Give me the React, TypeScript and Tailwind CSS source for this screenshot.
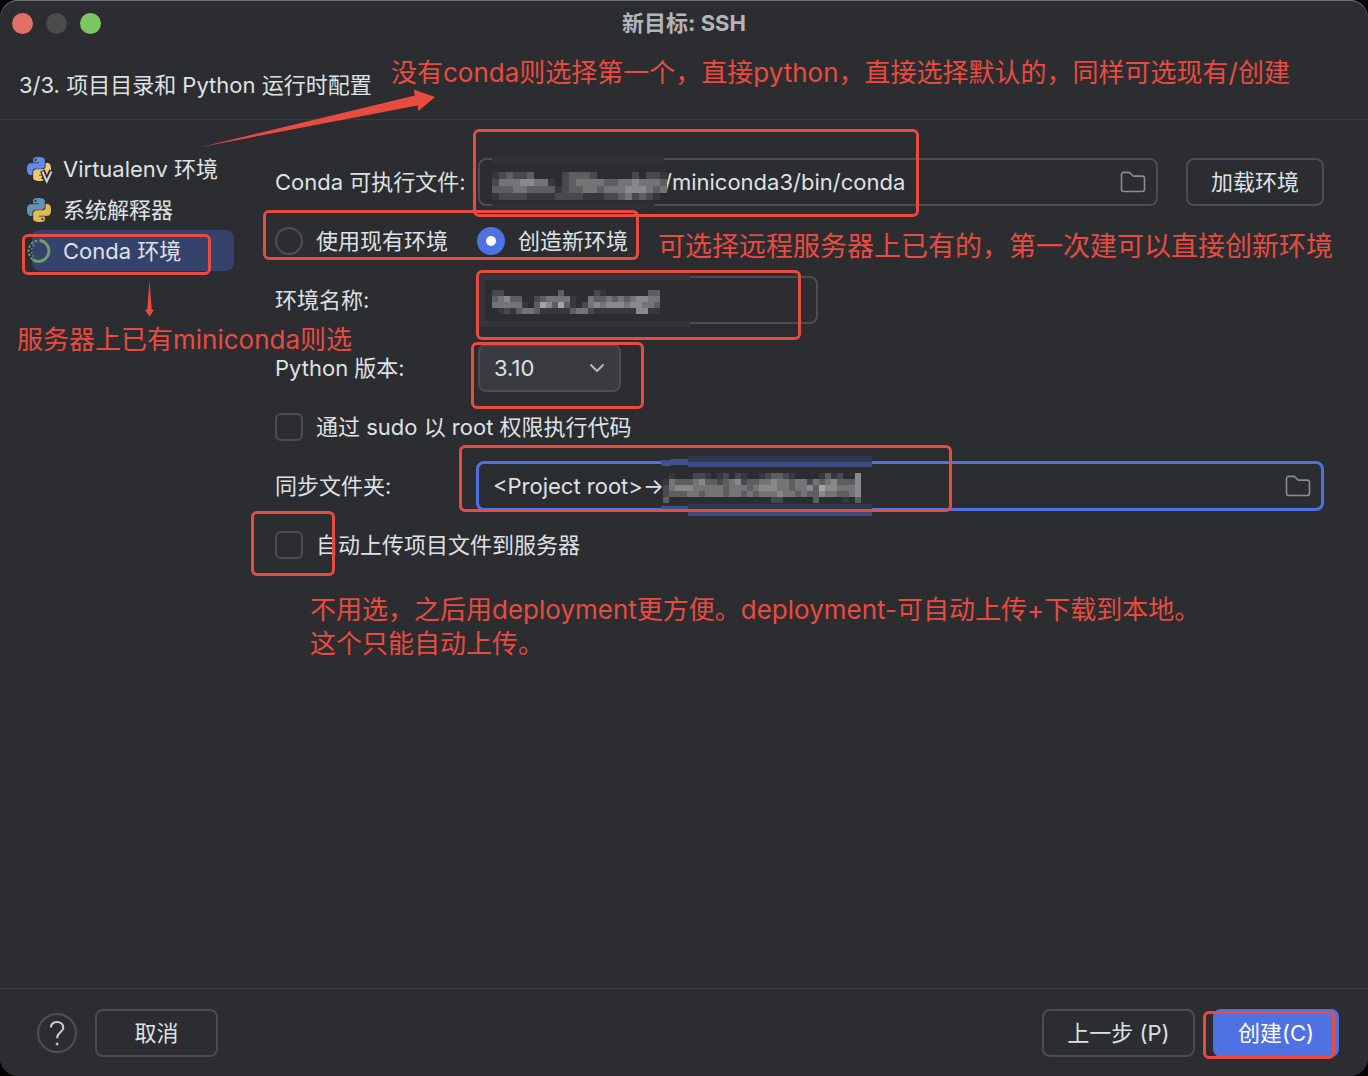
import React from 'react';
import { ChevronDown } from 'lucide-react';

const shades: Record<string, string> = {
  '1': '#36383b',
  '2': '#48494c',
  '3': '#5c5e60',
  '4': '#727476',
  '5': '#87898b',
  '6': '#a3a5a7',
};

const condaPathBlocks = [
  '1232230000233320000020221',
  '2444554410234444334454443',
  '3334433331233443444555434',
  '1222211112222111223423210',
];

const envNameBlocks = [
  '2200000000030000021000000033',
  '3453300234444100433434345544',
  '4444410365363102454555455443',
  '0121344311111344211111115511',
];

const syncPathBlocks = [
  '010002210120210012332100001312005',
  '143334533234523344544344243453335',
  '245554444434443455544344536554445',
  '233344344434434344454434335443345',
  '300000000000000000220000030000103',
];

interface MosaicProps {
  rows: string[];
  x: number;
  y: number;
  cell: number;
}

const Mosaic: React.FC<MosaicProps> = ({ rows, x, y, cell }) => (
  <g shapeRendering="crispEdges">
    {rows.map((row, r) =>
      row.split('').map((level, c) =>
        level === '0' ? null : (
          <rect
            key={`${r}-${c}`}
            x={x + c * cell}
            y={y + r * cell}
            width={cell}
            height={cell}
            fill={shades[level]}
          />
        )
      )
    )}
  </g>
);

const pythonHalf =
  'M14.25.18l.9.2.73.26.59.3.45.32.34.34.25.34.16.33.1.3.04.26.02.2-.01.13V8.5l-.05.63-.13.55-.21.46-.26.38-.3.31-.33.25-.35.19-.35.14-.33.1-.3.07-.26.04-.21.02H8.77l-.69.05-.59.14-.5.22-.41.27-.33.32-.27.35-.2.36-.15.37-.1.35-.07.32-.04.27-.02.21v3.06H3.17l-.21-.03-.28-.07-.32-.12-.35-.18-.36-.26-.36-.36-.35-.46-.32-.59-.28-.73-.21-.88-.14-1.05-.05-1.23.06-1.22.16-1.04.24-.87.32-.71.36-.57.4-.44.42-.33.42-.24.4-.16.36-.1.32-.05.24-.01h.16l.06.01h8.16v-.83H6.18l-.01-2.75-.02-.37.05-.34.11-.31.17-.28.25-.26.31-.23.38-.2.44-.18.51-.15.58-.12.64-.1.71-.06.77-.04.84-.02 1.27.05zm-6.3 1.98l-.23.33-.08.41.08.41.23.34.33.22.41.09.41-.09.33-.22.23-.34.08-.41-.08-.41-.23-.33-.33-.22-.41-.09-.41.09z';

const PythonIcon: React.FC = () => (
  <svg viewBox="0 0 24 24" className="size-6 shrink-0" aria-hidden="true">
    <path d={pythonHalf} fill="#6292b8" />
    <path d={pythonHalf} fill="#e0bb51" transform="rotate(180 12 12)" />
  </svg>
);

const VirtualenvIcon: React.FC = () => (
  <svg viewBox="0 0 24 24" className="size-6 shrink-0 overflow-visible" aria-hidden="true">
    <path d={pythonHalf} fill="#6288ec" />
    <path d={pythonHalf} fill="#ecc871" transform="rotate(180 12 12)" />
    <path d="M15.500 13.500l4.300 11.200 4.700-11.200" fill="none" stroke="#2b2d30" strokeWidth="5" />
    <path d="M15.500 14.500l4.300 10 4.700-10" fill="none" stroke="#ced0d6" strokeWidth="2" />
  </svg>
);

const CondaIcon: React.FC = () => (
  <svg viewBox="0 0 24 24" className="size-6 shrink-0" fill="none" stroke="#6f9d68" aria-hidden="true">
    <path d="M12.5 1.6a10.4 10.4 0 1 1-6.6 19.1" strokeWidth="3" />
    <path d="M5.6 20.2A10.4 10.4 0 0 1 11.5 1.6" strokeWidth="2" strokeDasharray="2.4 1.8" />
    <path d="M6.8 17.6A7.6 7.6 0 0 1 9.6 4.8" strokeWidth="1.4" strokeDasharray="1.6 2.2" />
  </svg>
);

const FolderIcon: React.FC = () => (
  <svg viewBox="0 0 26 22" className="h-[22px] w-[26px]" fill="none" aria-hidden="true">
    <path
      d="M1.5 3.6a2.2 2.2 0 0 1 2.2-2.2h4.9c.6 0 1.1.2 1.5.6l2.6 2.7c.3.3.6.4 1 .4h8.600a2.200 2.200 0 0 1 2.200 2.200v11a2.200 2.200 0 0 1-2.200 2.200H3.700a2.200 2.200 0 0 1-2.200-2.200z"
      stroke="#8c8e92"
      strokeWidth="1.6"
    />
  </svg>
);

const environments = [
  { name: 'Virtualenv 环境', icon: <VirtualenvIcon />, selected: false },
  { name: '系统解释器', icon: <PythonIcon />, selected: false },
  { name: 'Conda 环境', icon: <CondaIcon />, selected: true },
];

const markBoxes = [
  'left-[473px] top-[129px] w-[446px] h-[88px]',
  'left-[263px] top-[210px] w-[376px] h-[50px]',
  'left-[476px] top-[270px] w-[325px] h-[70px]',
  'left-[471px] top-[342px] w-[173px] h-[67px]',
  'left-[459px] top-[445px] w-[493px] h-[67px]',
  'left-[251px] top-[511px] w-[84px] h-[65px]',
  'left-[22px] top-[234px] w-[189px] h-[41px]',
];

const notes = [
  {
    style: 'left-[391px] top-[56px] text-[26px]',
    text: '没有conda则选择第一个，直接python，直接选择默认的，同样可选现有/创建',
  },
  {
    style: 'left-[658px] top-[230px] text-[27px]',
    text: '可选择远程服务器上已有的，第一次建可以直接创新环境',
  },
  {
    style: 'left-[17px] top-[323px] text-[26px]',
    text: '服务器上已有miniconda则选',
  },
  {
    style: 'left-[310px] top-[593px] text-[26px]',
    text: '不用选，之后用deployment更方便。deployment-可自动上传+下载到本地。\n这个只能自动上传。',
  },
];

const Annotations: React.FC = () => (
  <div className="pointer-events-none absolute inset-0">
    <svg className="absolute inset-0 h-full w-full" fill="#e94b40" aria-hidden="true">
      <path d="M201 147L415 95.5l-1.5-6L435 97l-16.5 14-1-5.500z" />
      <path d="M149.5 280l2.200 29.500 2.300.5-4.500 6.500-4.500-6.500 2.300-.5z" />
    </svg>
    {markBoxes.map(box => (
      <div key={box} className={`absolute rounded-md border-3 border-[#e94b40] ${box}`} />
    ))}
    {notes.map(note => (
      <p key={note.text} className={`absolute whitespace-pre leading-[34px] text-[#e94b40] ${note.style}`}>
        {note.text}
      </p>
    ))}
  </div>
);

const fieldClass = 'relative flex h-12 items-center rounded-lg border-2 border-[#4b4d51]';
const buttonClass = 'h-12 rounded-lg border-2 border-[#4b4d51]';
const checkboxClass = 'size-7 appearance-none rounded-md border-2 border-[#4b4d51] checked:bg-[#4f72e3]';
const radioClass =
  'size-7 appearance-none rounded-full border-2 border-[#4e5054] checked:border-9 checked:border-[#4f72e3] checked:bg-white';

const App: React.FC = () => {
  return (
    <div className="min-h-screen bg-black">
      <div className="relative flex min-h-screen flex-col overflow-hidden rounded-[18px] bg-[#2b2d30] shadow-[inset_0_1px_0_#6e7073] font-['Inter','Noto_Sans_CJK_SC',sans-serif] text-[22px] leading-[30px] text-[#dfe1e5]">
        {/* Title bar */}
        <header className="border-b border-[#393b40]">
          <div className="relative flex h-[46px] items-center gap-[13px] px-3">
            <button aria-label="Close" className="size-[21px] rounded-full bg-[#e07065]" />
            <button aria-label="Minimize" className="size-[21px] rounded-full bg-[#4a4b4d]" />
            <button aria-label="Zoom" className="size-[21px] rounded-full bg-[#7bc563]" />
            <h1 className="absolute inset-x-0 text-center font-bold text-[#b3b5b9] pointer-events-none">新目标: SSH</h1>
          </div>
          <h2 className="px-[19px] pt-6 pb-[19px]">3/3. 项目目录和 Python 运行时配置</h2>
        </header>

        <main className="flex flex-1">
          {/* Environment types */}
          <nav className="w-[234px] shrink-0 pt-7 pl-8">
            <ul>
              {environments.map(env => (
                <li key={env.name}>
                  <a
                    href="#"
                    className={`flex h-[41px] items-center rounded-lg ${env.selected ? 'bg-[#35426b]' : ''}`}
                  >
                    <span className="-ml-[5px] mr-3">{env.icon}</span>
                    {env.name}
                  </a>
                </li>
              ))}
            </ul>
          </nav>

          {/* Settings form */}
          <form className="flex flex-1 flex-col gap-5 pt-[38px] pr-11 pl-[41px]">
            <div className="flex items-center">
              <label htmlFor="conda" className="w-[203px] shrink-0">Conda 可执行文件:</label>
              <div className={`${fieldClass} mr-7 flex-1`}>
                <input
                  id="conda"
                  defaultValue="/miniconda3/bin/conda"
                  className="h-full min-w-0 flex-1 bg-transparent pl-[184px] outline-none"
                />
                <button type="button" aria-label="Browse" className="mr-2.5"><FolderIcon /></button>
                <svg className="pointer-events-none absolute -top-1 left-0 h-14 w-[190px]" aria-hidden="true">
                  <rect x="12" y="0" width="172" height="9" fill="#2f3134" />
                  <rect x="12" y="47" width="162" height="6" fill="#2f3134" />
                  <Mosaic rows={condaPathBlocks} x={12} y={16} cell={7} />
                </svg>
              </div>
              <button type="button" className={`${buttonClass} w-[138px]`}>加载环境</button>
            </div>

            <div className="flex items-center">
              <label className="flex w-[202px] items-center gap-[13px]">
                <input type="radio" name="env" className={radioClass} />
                使用现有环境
              </label>
              <label className="flex items-center gap-[13px]">
                <input type="radio" name="env" defaultChecked className={radioClass} />
                创造新环境
              </label>
            </div>

            <div className="flex items-center">
              <label htmlFor="name" className="w-[203px] shrink-0">环境名称:</label>
              <div className={`${fieldClass} w-[340px]`}>
                <input id="name" className="h-full w-full bg-transparent px-3 outline-none" />
                <svg className="pointer-events-none absolute -top-1 -left-0.5 h-14 w-[220px]" aria-hidden="true">
                  <path d="M1 0h211v6H7v41h205v6H1z" fill="#333538" />
                  <rect x="7" y="6" width="205" height="41" fill="#2b2d30" />
                  <Mosaic rows={envNameBlocks} x={14} y={16} cell={6} />
                </svg>
              </div>
            </div>

            <div className="flex items-center">
              <label htmlFor="python" className="w-[203px] shrink-0">Python 版本:</label>
              <div className="relative">
                <select
                  id="python"
                  className="h-12 w-[143px] appearance-none rounded-lg border-2 border-[#4b4d51] bg-[#393b40] px-[14px] outline-none"
                >
                  <option>3.10</option>
                </select>
                <ChevronDown className="pointer-events-none absolute top-3 right-3 size-6 text-[#b4b8bf]" strokeWidth={2} />
              </div>
            </div>

            <label className="flex items-center gap-[13px]">
              <input type="checkbox" className={checkboxClass} />
              通过 sudo 以 root 权限执行代码
            </label>

            <div className="flex items-center">
              <label htmlFor="sync" className="w-[201px] shrink-0">同步文件夹:</label>
              <div className="relative -my-px flex h-[50px] flex-1 items-center rounded-lg border-3 border-[#4f72e3]">
                <input
                  id="sync"
                  defaultValue="<Project root>→"
                  className="h-full min-w-0 flex-1 bg-transparent px-[14px] outline-none"
                />
                <button type="button" aria-label="Browse" className="mr-2.5"><FolderIcon /></button>
                <svg className="pointer-events-none absolute -top-2 left-[182px] h-16 w-[220px]" aria-hidden="true">
                  <path d="M0 4h10v-1h17v6H10v1H0zM0 50h27v6H0z" fill="#41538f" />
                  <path d="M27 0h184v6H27zM27 48h184v6H27z" fill="#2f384f" />
                  <path d="M27 6h184v5H27zM27 54h184v6H27z" fill="#3b4b80" />
                  <Mosaic rows={syncPathBlocks} x={2} y={17} cell={6} />
                </svg>
              </div>
            </div>

            <label className="flex items-center gap-[13px]">
              <input type="checkbox" className={checkboxClass} />
              自动上传项目文件到服务器
            </label>
          </form>
        </main>

        {/* Dialog buttons */}
        <footer className="flex items-center gap-[18px] border-t border-[#393b40] pt-5 pr-[29px] pb-[19px] pl-[37px]">
          <button aria-label="Help" className="flex size-10 items-center justify-center rounded-full border-2 border-[#4e5054]">
            <svg viewBox="0 0 20 28" className="h-7 w-5" fill="none" stroke="#ced0d6" strokeWidth="2" aria-hidden="true">
              <path d="M4 8.5C4 5 6.500 3 10 3s6.300 2.300 6.300 5.700c0 4.300-6.100 5-6.100 9.800v.8" />
              <circle cx="10.1" cy="25" r="1" fill="#ced0d6" strokeWidth="1" />
            </svg>
          </button>
          <button className={`${buttonClass} w-[123px]`}>取消</button>
          <button className={`${buttonClass} ml-auto w-[153px]`}>上一步 (P)</button>
          <div className="relative">
            <button className="h-12 w-[126px] rounded-lg bg-[#4f72e3] text-white">创建(C)</button>
            <div className="pointer-events-none absolute top-0.5 right-1 -bottom-0.5 -left-2.5 rounded-md border-3 border-[#e94b40]" />
          </div>
        </footer>

        <Annotations />
      </div>
    </div>
  );
};

export default App;
